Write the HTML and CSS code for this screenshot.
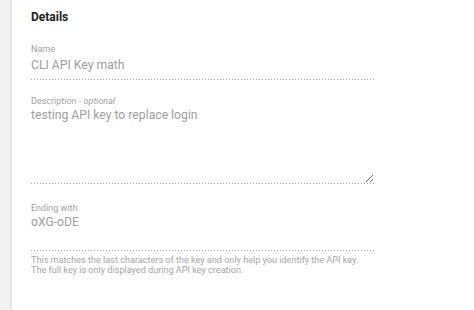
FILE: index.html
```html
<!DOCTYPE html>
<html>
<head>
<meta charset="utf-8">
<link rel="stylesheet" href="styles.css">
</head>
<body>
<div class="page">
  <div class="strip"></div>
  <div class="card">
    <h2 class="title">Details</h2>
    <div class="field">
      <div class="label">Name</div>
      <div class="value">CLI API Key math</div>
      <div class="underline"></div>
    </div>
    <div class="field field-desc">
      <div class="label">Description - <em>optional</em></div>
      <textarea class="area" readonly>testing API key to replace login</textarea>
      <div class="underline"></div>
    </div>
    <div class="field field-end">
      <div class="label">Ending with</div>
      <div class="value value-end">oXG-oDE</div>
      <div class="underline"></div>
      <p class="helper">This matches the last characters of the key and only help you identify the API key.<br>The full key is only displayed during API key creation.</p>
    </div>
  </div>
</div>
</body>
</html>
```

FILE: styles.css
```css
html, body {
  margin: 0;
  padding: 0;
  background: #ffffff;
  font-family: Roboto, "Liberation Sans", sans-serif;
}
.page {
  display: flex;
  width: 474px;
  height: 310px;
  overflow: hidden;
}
.strip {
  width: 12px;
  flex: none;
  background: #f3f3f3;
}
.card {
  flex: 1;
  background: #fff;
  box-shadow: -1px 0 3px rgba(0,0,0,0.10);
  padding: 9px 0 0 19px;
}
.title {
  margin: 0;
  font-size: 12px;
  line-height: 16px;
  font-weight: 700;
  color: #212121;
}
.field {
  width: 343px;
  margin-top: 19.4px;
}
.label {
  font-size: 9px;
  line-height: 11px;
  color: #a3a3a3;
}
.label em {
  font-style: italic;
}
.value {
  margin-top: 1.6px;
  font-size: 12.2px;
  line-height: 16px;
  color: #a0a0a0;
  padding-bottom: 6px;
}
.value-end {
  margin-top: 0;
  padding-bottom: 20px;
}
.underline {
  height: 1px;
  background-image: linear-gradient(to right, rgba(0,0,0,0.34) 0%, rgba(0,0,0,0.34) 40%, transparent 40%);
  background-size: 3px 1px;
  background-repeat: repeat-x;
}
.field-desc {
  margin-top: 16.4px;
}
.area {
  display: block;
  box-sizing: border-box;
  width: 343px;
  height: 76px;
  margin: -0.4px 0 0 0;
  padding: 0;
  border: none;
  outline: none;
  resize: vertical;
  font-family: Roboto, "Liberation Sans", sans-serif;
  font-size: 12.2px;
  line-height: 16px;
  color: #a0a0a0;
  background: transparent;
  overflow: hidden;
}
.field-end {
  margin-top: 19px;
}
.helper {
  margin: 4px 0 0 0;
  font-size: 9.1px;
  line-height: 10px;
  color: #a6a6a6;
  width: 360px;
}
```
